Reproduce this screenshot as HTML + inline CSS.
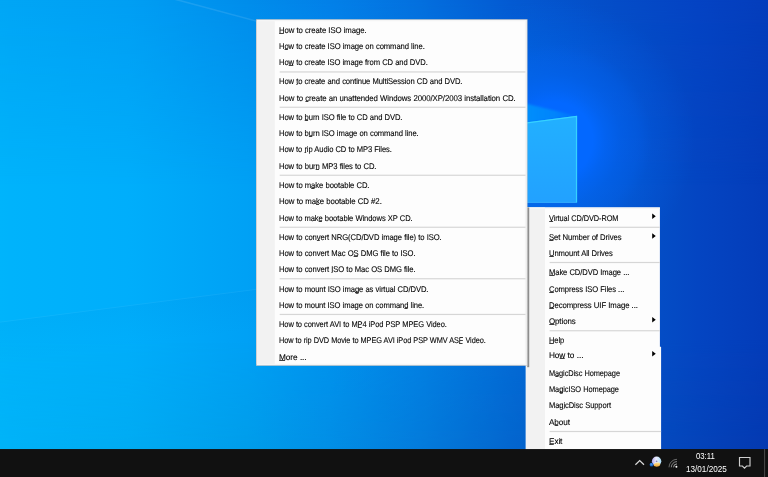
<!DOCTYPE html>
<html lang="en">
<head>
<meta charset="utf-8">
<title>MagicDisc tray menu</title>
<style>
html,body{margin:0;padding:0;width:768px;height:477px;overflow:hidden;background:#0078d7;}
body{position:relative;font-family:"Liberation Sans",Arial,sans-serif;}
#wall,#chrome{position:absolute;left:0;top:0;width:768px;height:477px;display:block;}
#txt{position:absolute;left:0;top:0;width:768px;height:477px;will-change:transform;}
.it{position:absolute;white-space:pre;font-size:8.3px;line-height:12px;height:12px;color:#000;transform-origin:0 50%;word-spacing:0.2px;letter-spacing:-0.1px;text-rendering:geometricPrecision;-webkit-text-stroke:0.1px #000;}
.clk{position:absolute;color:#fff;font-size:9px;line-height:12px;height:12px;white-space:pre;transform-origin:0 50%;}
</style>
</head>
<body>
<svg id="wall" viewBox="0 0 768 477" preserveAspectRatio="none">
<defs>
<linearGradient id="gmid" x1="0" y1="0" x2="768" y2="0" gradientUnits="userSpaceOnUse"><stop offset="0.0000" stop-color="#00b4fb"/><stop offset="0.0130" stop-color="#00b3fb"/><stop offset="0.1667" stop-color="#00aefb"/><stop offset="0.3203" stop-color="#00a1f5"/><stop offset="0.4297" stop-color="#0193ee"/><stop offset="0.5469" stop-color="#0281e4"/><stop offset="0.6641" stop-color="#036cd7"/><stop offset="0.7812" stop-color="#0458cb"/><stop offset="0.8776" stop-color="#044ac4"/><stop offset="0.9089" stop-color="#0445c2"/><stop offset="1.0000" stop-color="#043cb9"/></linearGradient>
<linearGradient id="gtop" x1="0" y1="0" x2="768" y2="0" gradientUnits="userSpaceOnUse"><stop offset="0.0000" stop-color="#00a6f5"/><stop offset="0.0130" stop-color="#00a5f5"/><stop offset="0.1667" stop-color="#009ef3"/><stop offset="0.3203" stop-color="#008deb"/><stop offset="0.4297" stop-color="#0280e8"/><stop offset="0.5469" stop-color="#036fde"/><stop offset="0.6641" stop-color="#035ad2"/><stop offset="0.7812" stop-color="#044ec8"/><stop offset="0.9089" stop-color="#0443c3"/><stop offset="1.0000" stop-color="#043dbb"/></linearGradient>
<linearGradient id="gbot" x1="0" y1="0" x2="768" y2="0" gradientUnits="userSpaceOnUse"><stop offset="0.0000" stop-color="#00b3f7"/><stop offset="0.0130" stop-color="#00b2f7"/><stop offset="0.1667" stop-color="#00abf2"/><stop offset="0.3203" stop-color="#009dea"/><stop offset="0.4297" stop-color="#018ee5"/><stop offset="0.5469" stop-color="#037bdb"/><stop offset="0.6641" stop-color="#0366ce"/><stop offset="0.7812" stop-color="#0455c4"/><stop offset="0.8776" stop-color="#0447bc"/><stop offset="1.0000" stop-color="#0439b1"/></linearGradient>
<linearGradient id="vtop" x1="0" y1="0" x2="0" y2="185" gradientUnits="userSpaceOnUse"><stop offset="0" stop-color="#fff"/><stop offset="1" stop-color="#000"/></linearGradient>
<linearGradient id="vbot" x1="0" y1="340" x2="0" y2="449" gradientUnits="userSpaceOnUse"><stop offset="0" stop-color="#000"/><stop offset="1" stop-color="#fff"/></linearGradient>
<mask id="mtop" maskUnits="userSpaceOnUse" x="0" y="0" width="768" height="477"><rect width="768" height="477" fill="url(#vtop)"/></mask>
<mask id="mbot" maskUnits="userSpaceOnUse" x="0" y="0" width="768" height="477"><rect width="768" height="477" fill="url(#vbot)"/></mask>
<radialGradient id="glow" cx="555" cy="140" r="140" gradientUnits="userSpaceOnUse">
<stop offset="0" stop-color="#0368ff" stop-opacity="1"/>
<stop offset="0.27" stop-color="#0368ff" stop-opacity="1"/>
<stop offset="0.36" stop-color="#0368ff" stop-opacity="0.72"/>
<stop offset="0.47" stop-color="#0368ff" stop-opacity="0.5"/>
<stop offset="0.6" stop-color="#0368ff" stop-opacity="0.36"/>
<stop offset="0.69" stop-color="#0368ff" stop-opacity="0.2"/>
<stop offset="1" stop-color="#0368ff" stop-opacity="0"/>
</radialGradient>
<linearGradient id="pane" x1="0" y1="116" x2="0" y2="205" gradientUnits="userSpaceOnUse"><stop offset="0" stop-color="#22b0ff"/><stop offset="1" stop-color="#22a1ff"/></linearGradient>
<linearGradient id="tri" x1="527" y1="0" x2="577" y2="0" gradientUnits="userSpaceOnUse"><stop offset="0" stop-color="#058efc" stop-opacity="1"/><stop offset="0.55" stop-color="#058cfc" stop-opacity="0.8"/><stop offset="1" stop-color="#0a88fc" stop-opacity="0.25"/></linearGradient>
<filter id="soft" x="-5%" y="-20%" width="110%" height="140%"><feGaussianBlur stdDeviation="1.3"/></filter>
<linearGradient id="beam2" x1="128" y1="306" x2="133" y2="346" gradientUnits="userSpaceOnUse"><stop offset="0" stop-color="#0060c0" stop-opacity="0.05"/><stop offset="1" stop-color="#0060c0" stop-opacity="0"/></linearGradient>
</defs>
<rect width="768" height="477" fill="url(#gmid)"/>
<rect width="768" height="477" fill="url(#gtop)" mask="url(#mtop)"/>
<rect width="768" height="477" fill="url(#gbot)" mask="url(#mbot)"/>
<rect width="768" height="477" fill="url(#glow)"/>
<polygon points="500,97.2 577,115.9 500,126.2" fill="url(#tri)" filter="url(#soft)"/>
<polygon points="500,125.9 577.1,115.7 577.1,202.8 500,202.8" fill="url(#pane)"/>
<polyline points="500,126.5 576.5,116.4 576.5,202.5" fill="none" stroke="#38d6ff" stroke-width="1.2" stroke-opacity="0.9"/>
<line x1="500" y1="202.4" x2="576" y2="202.4" stroke="#4cc4ff" stroke-width="0.8" stroke-opacity="0.6"/>
<line x1="174" y1="-1" x2="258" y2="21.5" stroke="#fff" stroke-width="1.6" stroke-opacity="0.1"/>
<polygon points="0,322.6 256,289.8 256,360 0,393" fill="url(#beam2)"/>
<line x1="0" y1="322.2" x2="256" y2="289.4" stroke="#fff" stroke-width="1" stroke-opacity="0.05"/>
</svg>
<svg id="chrome" viewBox="0 0 768 477">
<polygon points="525.8,207.4 659.9,207.4 659.9,346.8 661.1,346.8 661.1,450 525.8,450" fill="#fdfdfd"/>
<rect x="525.80" y="207.40" width="19.15" height="242.60" fill="#f2f2f2"/>
<rect x="525.80" y="207.40" width="134.10" height="1.50" fill="#f6f6f6"/>
<rect x="549.60" y="226.70" width="110.30" height="1.20" fill="#d6d6d6"/>
<rect x="549.60" y="261.90" width="110.30" height="1.20" fill="#d6d6d6"/>
<rect x="549.60" y="330.15" width="110.30" height="1.20" fill="#d6d6d6"/>
<rect x="549.60" y="430.90" width="111.50" height="1.20" fill="#d6d6d6"/>
<polygon points="652.2,213.60 655.75,216.35 652.2,219.10" fill="#000"/>
<polygon points="652.2,233.20 655.75,235.95 652.2,238.70" fill="#000"/>
<polygon points="652.2,317.00 655.75,319.75 652.2,322.50" fill="#000"/>
<polygon points="652.2,351.10 655.75,353.85 652.2,356.60" fill="#000"/>
<rect x="527.2" y="207.4" width="2.3" height="159.8" fill="url(#shg)"/>
<rect x="256.20" y="19.35" width="271.15" height="346.35" fill="#f5f5f5"/>
<rect x="256.20" y="21.25" width="18.65" height="342.55" fill="#f2f2f2"/>
<rect x="274.85" y="21.25" width="250.00" height="342.55" fill="#fdfdfd"/>
<rect x="256.45" y="19.6" width="270.65" height="345.85" fill="none" stroke="#a0a0a0" stroke-width="0.5" stroke-opacity="0.7"/>
<rect x="279.70" y="71.35" width="245.80" height="1.20" fill="#d6d6d6"/>
<rect x="279.70" y="106.65" width="245.80" height="1.20" fill="#d6d6d6"/>
<rect x="279.70" y="174.65" width="245.80" height="1.20" fill="#d6d6d6"/>
<rect x="279.70" y="226.65" width="245.80" height="1.20" fill="#d6d6d6"/>
<rect x="279.70" y="278.15" width="245.80" height="1.20" fill="#d6d6d6"/>
<rect x="279.70" y="313.85" width="245.80" height="1.20" fill="#d6d6d6"/>
<rect x="549.24" y="221.25" width="3.86" height="0.75" fill="#000"/>
<rect x="549.24" y="240.25" width="4.20" height="0.75" fill="#000"/>
<rect x="549.24" y="256.25" width="4.59" height="0.75" fill="#000"/>
<rect x="549.24" y="275.25" width="5.40" height="0.75" fill="#000"/>
<rect x="549.24" y="292.25" width="4.58" height="0.75" fill="#000"/>
<rect x="549.24" y="308.25" width="4.67" height="0.75" fill="#000"/>
<rect x="549.24" y="324.25" width="5.21" height="0.75" fill="#000"/>
<rect x="549.24" y="343.25" width="4.54" height="0.75" fill="#000"/>
<rect x="559.63" y="358.25" width="5.07" height="0.75" fill="#000"/>
<rect x="555.30" y="376.25" width="3.19" height="0.75" fill="#000"/>
<rect x="559.40" y="392.25" width="3.22" height="0.75" fill="#000"/>
<rect x="563.64" y="408.25" width="0.76" height="0.75" fill="#000"/>
<rect x="554.59" y="425.25" width="3.62" height="0.75" fill="#000"/>
<rect x="549.24" y="444.25" width="4.53" height="0.75" fill="#000"/>
<rect x="279.15" y="33.25" width="4.68" height="0.75" fill="#000"/>
<rect x="284.58" y="49.25" width="3.32" height="0.75" fill="#000"/>
<rect x="288.70" y="65.25" width="4.59" height="0.75" fill="#000"/>
<rect x="296.33" y="84.25" width="1.20" height="0.75" fill="#000"/>
<rect x="305.40" y="101.25" width="3.00" height="0.75" fill="#000"/>
<rect x="304.73" y="120.25" width="3.32" height="0.75" fill="#000"/>
<rect x="308.91" y="136.25" width="3.32" height="0.75" fill="#000"/>
<rect x="304.55" y="152.25" width="1.60" height="0.75" fill="#000"/>
<rect x="315.67" y="169.25" width="3.34" height="0.75" fill="#000"/>
<rect x="311.23" y="188.25" width="3.35" height="0.75" fill="#000"/>
<rect x="316.03" y="204.25" width="2.98" height="0.75" fill="#000"/>
<rect x="318.65" y="221.25" width="3.30" height="0.75" fill="#000"/>
<rect x="316.87" y="240.25" width="2.91" height="0.75" fill="#000"/>
<rect x="353.62" y="256.25" width="4.17" height="0.75" fill="#000"/>
<rect x="331.40" y="272.25" width="1.19" height="0.75" fill="#000"/>
<rect x="355.04" y="292.25" width="3.33" height="0.75" fill="#000"/>
<rect x="404.36" y="308.25" width="3.31" height="0.75" fill="#000"/>
<rect x="357.73" y="327.25" width="4.06" height="0.75" fill="#000"/>
<rect x="459.01" y="343.25" width="3.57" height="0.75" fill="#000"/>
<rect x="279.15" y="360.25" width="5.95" height="0.75" fill="#000"/>
<defs>
<linearGradient id="shg" x1="527.2" y1="0" x2="529.5" y2="0" gradientUnits="userSpaceOnUse"><stop offset="0" stop-color="#8e8e8e"/><stop offset="0.7" stop-color="#8e8e8e"/><stop offset="1" stop-color="#c4c4c4"/></linearGradient>
<linearGradient id="disc" x1="651.9" y1="0" x2="661.4" y2="0" gradientUnits="userSpaceOnUse"><stop offset="0" stop-color="#b3a9ee"/><stop offset="0.45" stop-color="#eef0ff"/><stop offset="1" stop-color="#a9dcf8"/></linearGradient>
<linearGradient id="hand" x1="0" y1="462.6" x2="0" y2="467" gradientUnits="userSpaceOnUse"><stop offset="0" stop-color="#ffe596"/><stop offset="1" stop-color="#f0a02c"/></linearGradient>
<radialGradient id="ball" cx="651.3" cy="464.3" r="2" gradientUnits="userSpaceOnUse"><stop offset="0" stop-color="#4f9ff0"/><stop offset="1" stop-color="#0b4fb4"/></radialGradient>
<filter id="icb" x="-20%" y="-20%" width="140%" height="140%"><feGaussianBlur stdDeviation="0.35"/></filter>
</defs>
<rect x="0" y="449.05" width="768" height="28" fill="#111111"/>
<polyline points="635.4,464.7 639.7,460.6 644.0,464.7" fill="none" stroke="#dcdcdc" stroke-width="1.2"/>
<g filter="url(#icb)">
<circle cx="656.6" cy="461.2" r="4.7" fill="url(#disc)"/>
<circle cx="656.6" cy="461.3" r="0.9" fill="#8f88b8"/>
<path d="M653.6,465.2 C654,463.2 656.5,462.4 658.4,462.6 C660,462.8 660.6,464 660,465.3 C659.2,466.9 654.6,467.3 653.6,465.2 Z" fill="url(#hand)"/>
<circle cx="651.5" cy="464.7" r="1.9" fill="url(#ball)"/>
</g>
<g fill="none" stroke-width="0.85" filter="url(#icb)">
<path d="M669.0,467.3 A8.0,8.0 0 0 1 677.0,459.3" stroke="#7a7a7a"/>
<path d="M671.3,467.3 A5.7,5.7 0 0 1 677.0,461.6" stroke="#9c9c9c"/>
<path d="M673.6,467.3 A3.4,3.4 0 0 1 677.0,463.9" stroke="#b8b8b8"/>
</g>
<circle cx="676.4" cy="466.7" r="1" fill="#fff"/>
<path d="M739.5,457.5 H750 V466 H746.6 L744.5,468.2 L742.4,466 H739.5 Z" fill="none" stroke="#cfcfcf" stroke-width="1.15"/>
<line x1="764.6" y1="449.05" x2="764.6" y2="477" stroke="#4a4a4a" stroke-width="1"/>

</svg>

<div id="txt">
<div class="it" style="left:548.9px;top:212.00px;transform:scaleX(0.8899)">Virtual CD/DVD-ROM</div>
<div class="it" style="left:548.9px;top:231.00px;transform:scaleX(0.9292)">Set Number of Drives</div>
<div class="it" style="left:548.9px;top:247.00px;transform:scaleX(0.9212)">Unmount All Drives</div>
<div class="it" style="left:548.9px;top:266.00px;transform:scaleX(0.9178)">Make CD/DVD Image ...</div>
<div class="it" style="left:548.9px;top:283.00px;transform:scaleX(0.9187)">Compress ISO Files ...</div>
<div class="it" style="left:548.9px;top:299.00px;transform:scaleX(0.9345)">Decompress UIF Image ...</div>
<div class="it" style="left:548.9px;top:315.00px;transform:scaleX(0.9534)">Options</div>
<div class="it" style="left:548.9px;top:334.00px;transform:scaleX(0.9122)">Help</div>
<div class="it" style="left:548.9px;top:349.00px;transform:scaleX(1.0000)">How to ...</div>
<div class="it" style="left:548.9px;top:367.00px;transform:scaleX(0.8913)">MagicDisc Homepage</div>
<div class="it" style="left:548.9px;top:383.00px;transform:scaleX(0.8983)">MagicISO Homepage</div>
<div class="it" style="left:548.9px;top:399.00px;transform:scaleX(0.9100)">MagicDisc Support</div>
<div class="it" style="left:548.9px;top:416.00px;transform:scaleX(0.9865)">About</div>
<div class="it" style="left:548.9px;top:435.00px;transform:scaleX(0.9898)">Exit</div>
<div class="it" style="left:278.8px;top:24.00px;transform:scaleX(0.9368)">How to create ISO image.</div>
<div class="it" style="left:278.8px;top:40.00px;transform:scaleX(0.9228)">How to create ISO image on command line.</div>
<div class="it" style="left:278.8px;top:56.00px;transform:scaleX(0.9193)">How to create ISO image from CD and DVD.</div>
<div class="it" style="left:278.8px;top:75.00px;transform:scaleX(0.9197)">How to create and continue MultiSession CD and DVD.</div>
<div class="it" style="left:278.8px;top:92.00px;transform:scaleX(0.9441)">How to create an unattended Windows 2000/XP/2003 installation CD.</div>
<div class="it" style="left:278.8px;top:111.00px;transform:scaleX(0.9200)">How to burn ISO file to CD and DVD.</div>
<div class="it" style="left:278.8px;top:127.00px;transform:scaleX(0.9206)">How to burn ISO image on command line.</div>
<div class="it" style="left:278.8px;top:143.00px;transform:scaleX(0.9132)">How to rip Audio CD to MP3 Files.</div>
<div class="it" style="left:278.8px;top:160.00px;transform:scaleX(0.9243)">How to burn MP3 files to CD.</div>
<div class="it" style="left:278.8px;top:179.00px;transform:scaleX(0.9267)">How to make bootable CD.</div>
<div class="it" style="left:278.8px;top:195.00px;transform:scaleX(0.9424)">How to make bootable CD #2.</div>
<div class="it" style="left:278.8px;top:212.00px;transform:scaleX(0.9148)">How to make bootable Windows XP CD.</div>
<div class="it" style="left:278.8px;top:231.00px;transform:scaleX(0.9225)">How to convert NRG(CD/DVD image file) to ISO.</div>
<div class="it" style="left:278.8px;top:247.00px;transform:scaleX(0.9210)">How to convert Mac OS DMG file to ISO.</div>
<div class="it" style="left:278.8px;top:263.00px;transform:scaleX(0.9210)">How to convert ISO to Mac OS DMG file.</div>
<div class="it" style="left:278.8px;top:283.00px;transform:scaleX(0.9227)">How to mount ISO image as virtual CD/DVD.</div>
<div class="it" style="left:278.8px;top:299.00px;transform:scaleX(0.9185)">How to mount ISO image on command line.</div>
<div class="it" style="left:278.8px;top:318.00px;transform:scaleX(0.9025)">How to convert AVI to MP4 iPod PSP MPEG Video.</div>
<div class="it" style="left:278.8px;top:334.00px;transform:scaleX(0.8872)">How to rip DVD Movie to MPEG AVI iPod PSP WMV ASF Video.</div>
<div class="it" style="left:278.8px;top:351.00px;transform:scaleX(0.9989)">More ...</div>
<div class="clk" style="left:695.7px;top:450px;transform:scaleX(0.86)">03:11</div>
<div class="clk" style="left:685.7px;top:463px;transform:scaleX(0.905)">13/01/2025</div>
</div>
</body>
</html>
